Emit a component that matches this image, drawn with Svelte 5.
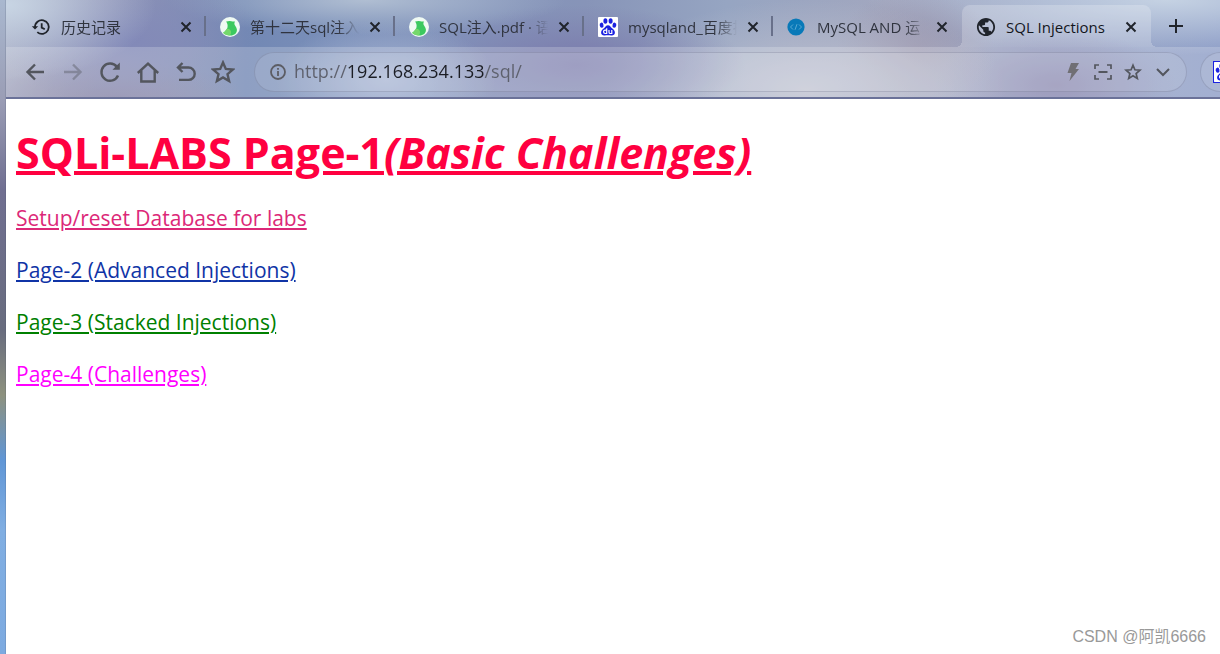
<script>
  let address = $state("http://192.168.234.133/sql/");
  let active = $state(5);

  let tabs = [
    { icon: "history", title: "历史记录" },
    { icon: "pear", title: "第十二天sql注入" },
    { icon: "pear", title: "SQL注入.pdf · 语" },
    { icon: "baidu", title: "mysqland_百度搜" },
    { icon: "code", title: "MySQL AND 运" },
    { icon: "globe", title: "SQL Injections" },
  ];

  let links = [
    { text: "Setup/reset Database for labs", color: "pink" },
    { text: "Page-2 (Advanced Injections)", color: "blue" },
    { text: "Page-3 (Stacked Injections)", color: "green" },
    { text: "Page-4 (Challenges)", color: "magenta" },
  ];
</script>

{#snippet paw()}
  <svg viewBox="0 0 20 20" width="20" height="20">
    <rect width="20" height="20" rx="1" fill="#fff" />
    <g fill="#1c22e0">
      <ellipse cx="7.4" cy="4" rx="2" ry="2.8" />
      <ellipse cx="12.6" cy="4" rx="2" ry="2.8" />
      <ellipse cx="3.6" cy="8.2" rx="1.9" ry="2.6" transform="rotate(-12 3.6 8.2)" />
      <ellipse cx="16.4" cy="8.2" rx="1.9" ry="2.6" transform="rotate(12 16.4 8.2)" />
      <path d="M10 8.2c-2 0-2.6 1.7-3.8 2.9-1.6 1.4-3.2 2.6-3.1 4.6.1 2.2 1.8 2.9 3.6 2.7 1.3-.1 2-.2 3.3-.2s2 .1 3.3.2c1.8.2 3.5-.5 3.6-2.7.1-2-1.5-3.2-3.1-4.6-1.2-1.2-1.8-2.9-3.8-2.9z" />
    </g>
    <path d="M8.7 11.2v5.3H7.2a1.5 1.5 0 0 1 0-3.300h1.5M11 13v2.200q0 1.300 1.200 1.300h1.600V13" fill="none" stroke="#fff" stroke-width="1.2" />
  </svg>
{/snippet}

{#snippet favicon(name)}
  {#if name == "history"}
    <svg viewBox="0 0 20 20" width="20" height="20" fill="none" stroke="#20242b" stroke-width="1.8">
      <path d="M4 10.3a6.9 6.9 0 1 1 2.3 4.9" />
      <path d="M.8 9.2l3.2 3.2 3.2-3.2z" fill="#20242b" stroke="none" />
      <path d="M10.7 6.3v4.3l3.1 1.7" />
    </svg>
  {:else if name == "pear"}
    <svg viewBox="0 0 20 20" width="20" height="20">
      <circle cx="10" cy="10" r="10" fill="#effaf3" />
      <path d="M6 4.500c1 .4 1.600-.4 3-.5 1.500-.1 2.200.4 3.300.4 1 0 1.600.3 2.700.1-.6 1-.5 1.600-.6 2.500 0 1.500 2.200 2.800 2.500 5.500.3 3.700-2.600 6-6.500 6-3.200 0-5.600-.8-7.300-2.700C5.200 14.300 7 12.500 7.500 10.200c.4-2.200-.1-4-1.500-5.700z" fill="#3cc95f" />
      <path d="M3.100 15.800c1.500-1 2.700-2.300 3.900-4.300 2.800.2 4.400 2 4 4.500-.2 1.100-.6 1.900-1.200 2.500-2.700 0-5-.8-6.700-2.700z" fill="#75d86b" />
    </svg>
  {:else if name == "baidu"}
    {@render paw()}
  {:else if name == "code"}
    <svg viewBox="0 0 20 20" width="20" height="20">
      <circle cx="9" cy="10" r="8.6" fill="#0879b8" />
      <path d="M6 7.500L3.500 10 6 12.500M12 7.500l2.500 2.500-2.500 2.500M10 7.200l-2 5.600" fill="none" stroke="#59aad4" stroke-width="1" />
    </svg>
  {:else}
    <svg viewBox="1 1 22 22" width="20" height="20">
      <path fill="#20242b" d="M12 2C6.480 2 2 6.480 2 12s4.480 10 10 10 10-4.480 10-10S17.520 2 12 2zm-1 17.930c-3.950-.49-7-3.850-7-7.930 0-.62.080-1.210.21-1.790L9 15v1c0 1.100.9 2 2 2v1.930zm6.900-2.540c-.26-.81-1-1.390-1.900-1.390h-1v-3c0-.55-.45-1-1-1H8v-2h2c.55 0 1-.45 1-1V7h2c1.100 0 2-.9 2-2v-.41c2.930 1.190 5 4.060 5 7.410 0 2.080-.8 3.970-2.100 5.390z" />
    </svg>
  {/if}
{/snippet}

<div class="desktop">
  <div class="window">
    <header>
      <div class="tabs">
        {#each tabs as tab, i}
          <div class="tab" class:active={active == i} class:divided={i < active - 1}>
            <button class="pick" onclick={() => (active = i)}>
              {@render favicon(tab.icon)}
              <span class="title">{tab.title}</span>
            </button>
            <button class="close" aria-label="Close tab">
              <svg viewBox="0 0 12 12" width="12" height="12"><path d="M1.500 1.500l9 9M10.500 1.500l-9 9" /></svg>
            </button>
          </div>
        {/each}
        <button class="add" aria-label="New tab">
          <svg viewBox="0 0 16 16" width="16" height="16"><path d="M8 1v14M1 8h14" /></svg>
        </button>
      </div>

      <div class="toolbar">
        <nav>
          <button aria-label="Back">
            <svg viewBox="0 0 24 24" width="24" height="24"><path d="M21 12H4.500M12 4.500L4.500 12l7.500 7.500" /></svg>
          </button>
          <button aria-label="Forward" disabled>
            <svg viewBox="0 0 24 24" width="24" height="24"><path d="M3 12h16.500M12 4.500l7.500 7.500-7.500 7.500" /></svg>
          </button>
          <button aria-label="Reload">
            <svg viewBox="0 0 24 24" width="24" height="24">
              <path d="M18.800 6.800a8.600 8.600 0 1 0 1.200 8.700" />
              <path class="solid" d="M21.800 2.500v7.300h-7.300z" />
            </svg>
          </button>
          <button aria-label="Home">
            <svg viewBox="0 0 24 24" width="24" height="24"><path d="M1.800 13L12 3.700 22.200 13M5.300 10.500v11h13.400v-11" /></svg>
          </button>
          <button aria-label="Undo">
            <svg viewBox="0 0 24 24" width="24" height="24"><path d="M8.500 3L4 7.500 8.500 12M4.500 7.500h10a6.200 6.200 0 0 1 0 12.400H5" /></svg>
          </button>
          <button aria-label="Favorites">
            <svg viewBox="0 0 24 24" width="24" height="24"><path d="M12 2.500l2.800 6.400 7 .7-5.300 4.600 1.600 6.900-6.100-3.700-6.100 3.700 1.600-6.900-5.300-4.600 7-.7z" /></svg>
          </button>
        </nav>

        <div class="address">
          <svg class="info" viewBox="0 0 16 16" width="16" height="16">
            <circle cx="8" cy="8" r="7" />
            <path d="M8 7v5M8 4v1.700" />
          </svg>
          <input aria-label="Address" spellcheck="false" bind:value={address} />
          <button aria-label="Speed mode">
            <svg viewBox="0 0 20 20" width="20" height="20"><path class="solid" d="M8 1h8l-3.500 6H16L6.500 19l2-8H4.500z" /></svg>
          </button>
          <button aria-label="Scan">
            <svg viewBox="0 0 20 20" width="20" height="20">
              <path class="thin" d="M2 7V3h4M14 3h4v4M18 13v4h-4M6 17H2v-4" />
              <path d="M5.500 10h9" />
            </svg>
          </button>
          <button aria-label="Bookmark">
            <svg viewBox="0 0 20 20" width="20" height="20"><path class="thin" d="M10 3.200l1.900 4.600 5 .4-3.800 3.300 1.200 4.900-4.300-2.600-4.300 2.600 1.200-4.900-3.800-3.300 5-.4z" /></svg>
          </button>
          <button aria-label="More">
            <svg viewBox="0 0 20 20" width="20" height="20"><path d="M4 7l6 6 6-6" /></svg>
          </button>
        </div>

        <button class="engine" aria-label="Search engine">{@render paw()}</button>
      </div>
    </header>

    <main>
      <h1><a href="#top">SQLi-LABS Page-1<i>(Basic Challenges)</i></a></h1>
      {#each links as link}
        <p><a class={link.color} href="#labs">{link.text}</a></p>
      {/each}
      <footer>CSDN @阿凯6666</footer>
    </main>
  </div>
</div>

<style>
  :global(body) {
    margin: 0;
  }

  .desktop {
    display: flex;
    box-sizing: border-box;
    min-height: 100vh;
    padding-left: 6px;
    overflow: hidden;
    font-family: "Open Sans", "Noto Sans CJK SC", sans-serif;
    background: linear-gradient(#a9b8cf, #9a9db5 100px, #706f91 190px, #686c7e 330px, #8d917e 395px, #6096d6 460px, #80aee2 530px, #7daae0);
  }

  .window {
    display: flex;
    flex-direction: column;
    flex: 1;
    min-width: 0;
    box-shadow: 0 0 1px #444c66;
  }

  header {
    border-bottom: 2px solid #6b7299;
    background:
      radial-gradient(ellipse 150px 75px at 0 5px, #c8d5e4, rgba(200, 213, 228, 0)),
      radial-gradient(ellipse 130px 70px at 125px 40px, #8289b8, rgba(130, 137, 184, 0)),
      radial-gradient(ellipse 130px 35px at 110px 97px, #8683a4, rgba(134, 131, 164, 0)),
      radial-gradient(ellipse 200px 35px at 360px 0, #b0bed2, rgba(176, 190, 210, 0)),
      radial-gradient(ellipse 110px 60px at 380px 80px, #a4b2d2, rgba(164, 178, 210, 0)),
      radial-gradient(ellipse 170px 60px at 570px 65px, #7a7aac, rgba(122, 122, 172, 0)),
      radial-gradient(ellipse 200px 90px at 800px 90px, #bec1d0, rgba(190, 193, 208, 0)),
      radial-gradient(ellipse 80px 60px at 910px 50px, #9a96ae, rgba(154, 150, 174, 0)),
      radial-gradient(ellipse 120px 55px at 1050px 85px, #8582ac, rgba(133, 130, 172, 0)),
      radial-gradient(ellipse 300px 55px at 1160px 0, #c5d2e3, rgba(197, 210, 227, 0)),
      linear-gradient(90deg, #a5a9c1, #9698b6 100px, #7288b4 240px, #7a8fb9 330px, #8394bb 450px, #8794b8 580px, #96a5c2 720px, #a2a7bf 880px, #97a3c4 1040px, #8c9cc6);
  }

  button {
    display: flex;
    align-items: center;
    justify-content: center;
    margin: 0;
    padding: 0;
    border: 0;
    background: none;
    font: inherit;
    color: inherit;
  }

  svg {
    display: block;
    flex: none;
  }

  .tabs {
    display: flex;
    box-sizing: border-box;
    height: 47px;
    padding: 5px 0 0 11px;
  }

  .tab {
    position: relative;
    display: flex;
    align-items: center;
    box-sizing: border-box;
    flex: 0 1 189px;
    min-width: 0;
    padding: 1px 14px 0;
    border-radius: 8px 8px 0 0;
    font-size: 15px;
    color: #30343f;
  }

  .tab.divided {
    background: linear-gradient(#68708a, #68708a) right center / 2px 20px no-repeat;
  }

  .tab.active {
    background: rgba(255, 255, 255, 0.22);
    color: #14161c;
  }

  /* curved feet of the active tab */
  .tab.active::before,
  .tab.active::after {
    content: "";
    position: absolute;
    bottom: 0;
    width: 6px;
    height: 6px;
  }

  .tab.active::before {
    right: 100%;
    background: radial-gradient(circle at 0 0, transparent 6px, rgba(255, 255, 255, 0.22) 6px);
  }

  .tab.active::after {
    left: 100%;
    background: radial-gradient(circle at 100% 0, transparent 6px, rgba(255, 255, 255, 0.22) 6px);
  }

  .pick {
    flex: 1;
    justify-content: flex-start;
    gap: 10px;
    min-width: 0;
  }

  .title {
    flex: 1;
    overflow: hidden;
    text-align: left;
    line-height: 24px;
    white-space: nowrap;
    mask-image: linear-gradient(90deg, #000 80%, transparent);
  }

  .active .title {
    mask-image: none;
  }

  .close {
    width: 12px;
    margin-left: 10px;
  }

  .close svg,
  .add svg {
    fill: none;
    stroke: #20242b;
    stroke-width: 2;
  }

  .add {
    width: 50px;
  }

  .toolbar {
    display: flex;
    align-items: center;
    height: 50px;
    padding-left: 10px;
    background: rgba(255, 255, 255, 0.2);
  }

  nav {
    display: flex;
    flex: none;
    width: 226px;
    margin-right: 12px;
  }

  nav button {
    flex: 1;
  }

  nav svg,
  .address svg {
    fill: none;
    stroke: #53565e;
    stroke-width: 2;
  }

  nav svg {
    stroke-width: 2.4;
  }

  nav .solid {
    fill: #53565e;
    stroke: none;
  }

  nav button:disabled {
    opacity: 0.4;
  }

  .address {
    display: flex;
    align-items: center;
    box-sizing: border-box;
    flex: 1;
    min-width: 0;
    height: 40px;
    padding: 0 13px 0 15px;
    gap: 10px;
    border: 1px solid rgba(90, 95, 125, 0.25);
    border-radius: 20px;
    background: rgba(255, 255, 255, 0.1);
  }

  .address .info {
    margin-right: -2px;
    stroke: #5c5d64;
    stroke-width: 1.8;
  }

  .address .thin {
    stroke-width: 1.7;
  }

  .address .solid {
    fill: #706f74;
    stroke: none;
  }

  input {
    flex: 1;
    min-width: 0;
    height: 30px;
    padding: 0 0 2px;
    border: 0;
    outline: 0;
    font-family: inherit;
    font-size: 18px;
    color: transparent;
    caret-color: #1b1d24;
    /* host part of the address is darker than the rest */
    background: linear-gradient(90deg, #5d606c 53px, #1b1d24 53px 190px, #5d606c 190px);
    background-clip: text;
  }

  .engine {
    box-sizing: border-box;
    flex: none;
    width: 20px;
    height: 40px;
    margin-left: 13px;
    padding-left: 13px;
    justify-content: flex-start;
    overflow: hidden;
    border: 1px solid rgba(90, 95, 125, 0.25);
    border-right: 0;
    border-radius: 20px 0 0 20px;
    background: rgba(255, 255, 255, 0.1);
  }

  .engine :global(svg) {
    outline: 1px solid #1c22e0;
  }

  main {
    display: flex;
    flex-direction: column;
    flex: 1;
    padding: 25px 10px 4px;
    background: #fff;
  }

  h1 {
    margin: 0 0 22px;
    font-size: 43px;
    line-height: 58px;
  }

  h1 a {
    color: #ff0040;
    text-decoration-thickness: 4px;
    text-underline-offset: 2px;
  }

  p {
    margin: 0 0 24px;
    font-size: 21px;
    line-height: 28px;
  }

  p a {
    text-decoration-thickness: 2px;
    text-underline-offset: 2px;
  }

  .pink {
    color: #dc2878;
  }

  .blue {
    color: #1034a6;
  }

  .green {
    color: #008000;
  }

  .magenta {
    color: #ff00ff;
  }

  footer {
    margin-top: auto;
    padding-right: 4px;
    text-align: right;
    font-family: "Liberation Sans", "Noto Sans CJK SC", sans-serif;
    font-size: 16px;
    line-height: 26px;
    color: #999;
  }
</style>
